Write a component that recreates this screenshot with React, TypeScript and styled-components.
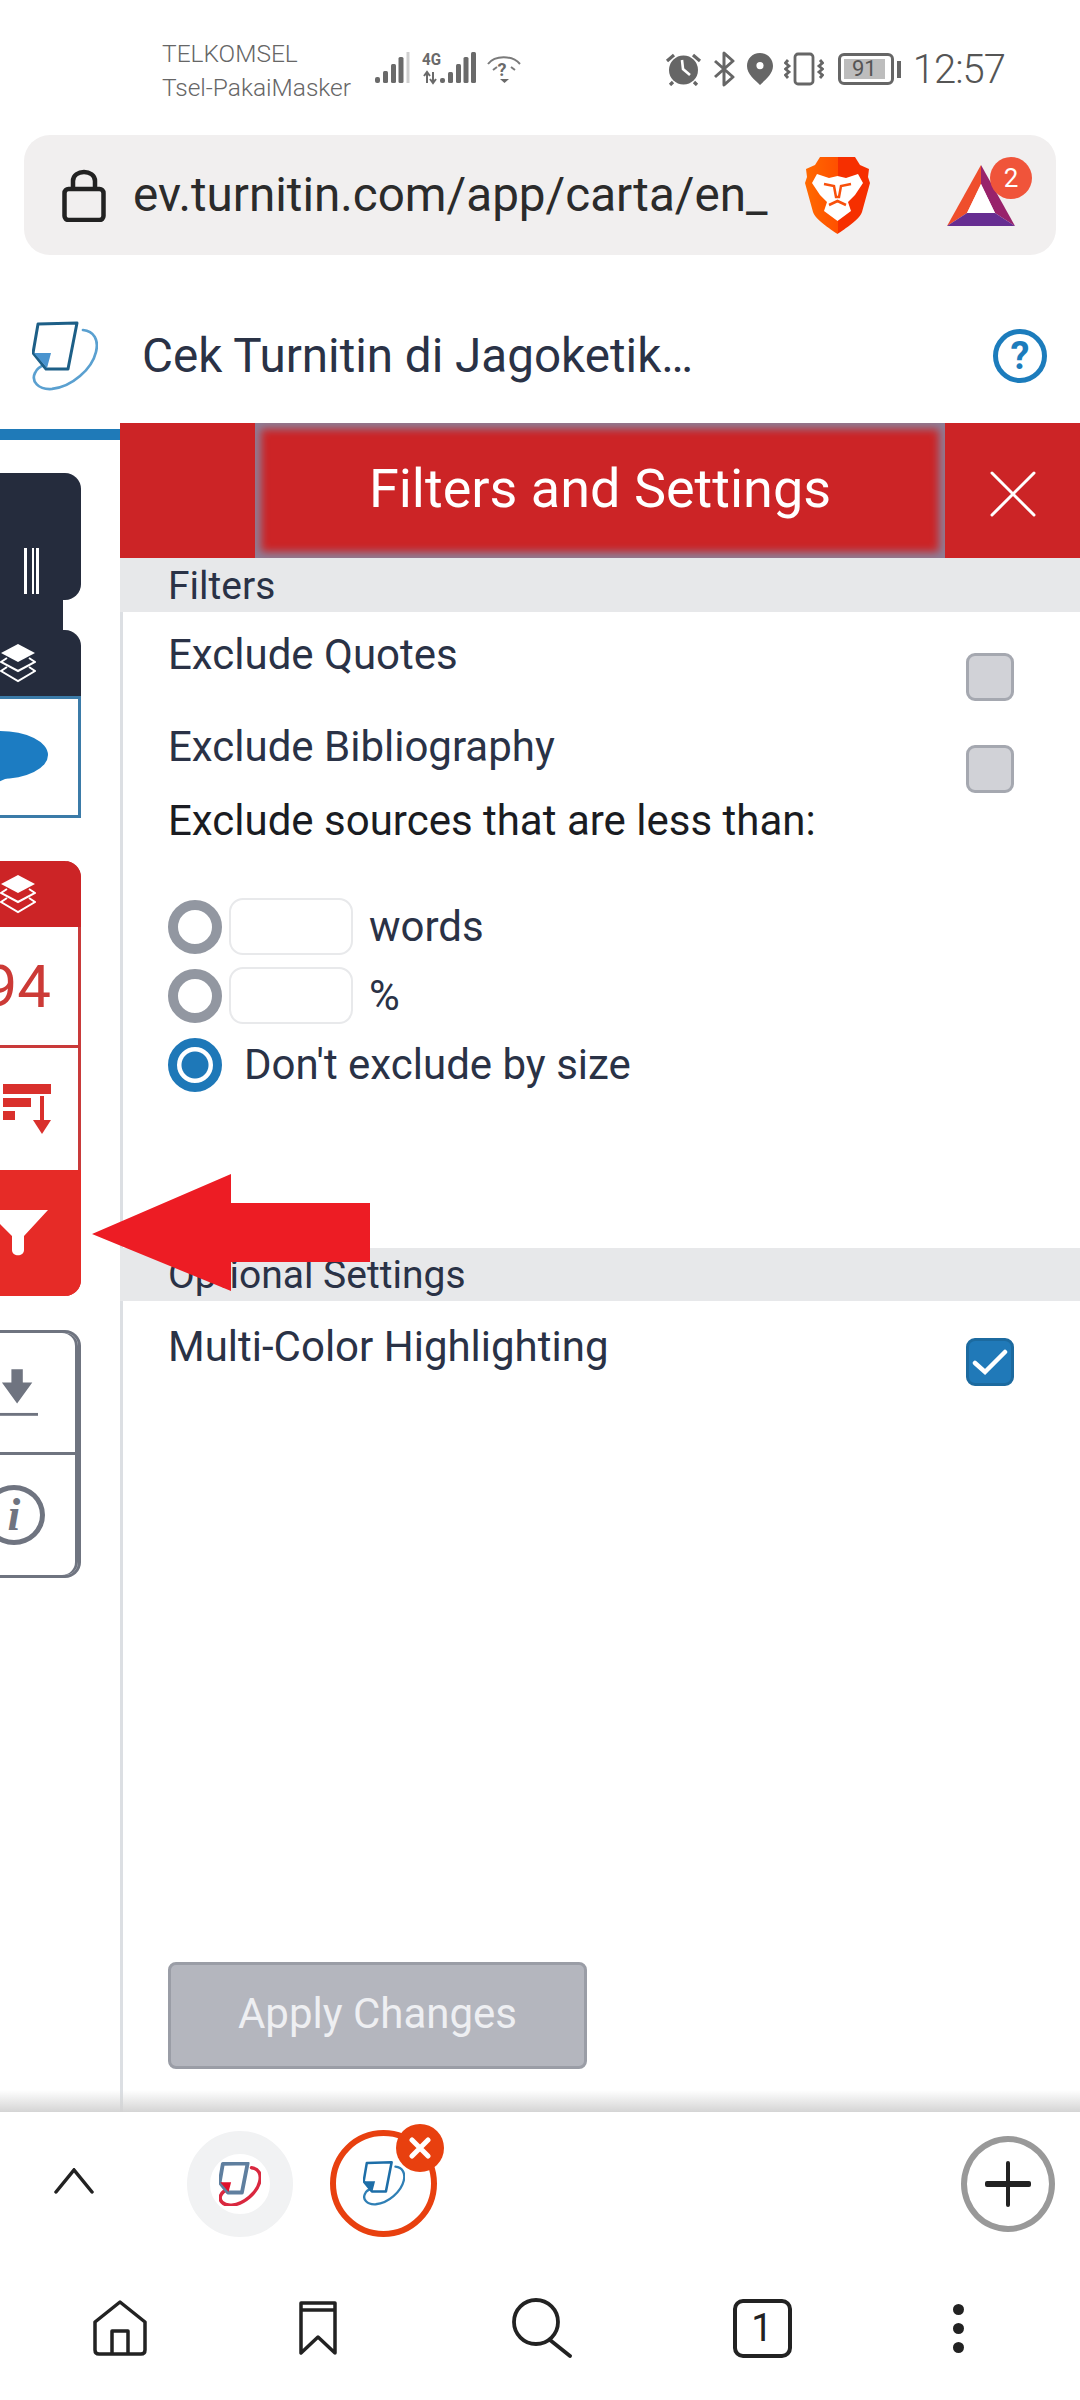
import { createGlobalStyle, styled } from "styled-components";

const GlobalStyle = createGlobalStyle`
  html, body {
    margin: 0;
    padding: 0;
    background: #fff;
  }
  * {
    box-sizing: border-box;
  }
  body {
    font-family: Roboto, "Liberation Sans", sans-serif;
  }
`;

const TurnitinLogo = ({
  size,
  paper,
  fold,
  swoosh,
  weight = 3,
}: {
  size: number;
  paper: string;
  fold: string;
  swoosh: string;
  weight?: number;
}) => (
  <svg width={size} height={size * 1.06} viewBox="0 0 66 70" fill="none">
    <path
      d="M51 9 C62 10 67 19 64 31 C60 48 40 66 20 68 C6 69 -1 60 3 52 C5 47 9 45 13 44"
      stroke={swoosh}
      strokeWidth={weight * 0.9}
      strokeLinecap="round"
    />
    <path d="M6 3 L45 2 L36 48 L14 48 L1 32 Z" fill="#fff" stroke={paper} strokeWidth={weight} strokeLinejoin="round" />
    <path d="M2 32 L19 32 L15 47 Z" fill={fold} />
  </svg>
);

const LayersIcon = () => (
  <svg width="36" height="40" viewBox="0 0 36 40" fill="none">
    <path d="M18 1 L35 10 L18 19 L1 10 Z" fill="#fff" />
    <path d="M7 15 L1 19 L18 28 L35 19 L29 15" stroke="#fff" strokeWidth="2" />
    <path d="M7 24 L1 28 L18 38 L35 28 L29 24" stroke="#fff" strokeWidth="2" />
  </svg>
);

const App = () => {
  return (
    <Page>
      <GlobalStyle />
      <StatusBar>
        <Carrier>
          <CarrierLine>TELKOMSEL</CarrierLine>
          <CarrierLine>Tsel-PakaiMasker</CarrierLine>
        </Carrier>
        <svg width="146" height="40" viewBox="0 -6 146 40" fill="#6a6a6a">
          <rect x="0" y="25" width="5" height="6" rx="2" />
          <rect x="8" y="19" width="5" height="12" rx="1.5" />
          <rect x="16" y="12" width="5" height="19" rx="1.5" />
          <rect x="23.5" y="5" width="5" height="26" rx="1.5" />
          <rect x="31.5" y="0" width="3" height="31" fill="#cfcfcf" />
          <text x="47" y="13" fontSize="17" fontWeight="700" fontFamily="Roboto" textLength="19" lengthAdjust="spacingAndGlyphs">
            4G
          </text>
          <path d="M52 31 V21 M49 24 L52 20 L55 24 M58 20 V30 M55 27 L58 31 L61 27" fill="none" stroke="#6a6a6a" strokeWidth="2" />
          <rect x="65" y="26" width="5" height="5" rx="2" />
          <rect x="73" y="20" width="5" height="11" rx="1.5" />
          <rect x="81" y="12" width="5" height="19" rx="1.5" />
          <rect x="88.5" y="5" width="5" height="26" rx="1.5" />
          <rect x="96" y="0" width="5" height="31" rx="1.5" />
          <g fill="none" stroke="#7a7a7a" strokeWidth="2">
            <path d="M113 12 C120 3 137 3 145 12" />
            <path d="M118 18 L122 15 M140 18 L136 15" />
          </g>
          <text x="122.5" y="24" fontSize="18" fontWeight="700" fontFamily="Roboto" fill="#6a6a6a">?</text>
          <path d="M125 27 H134 L129.5 31 Z" />
        </svg>
        <StatusRight>
          <svg width="37" height="34" viewBox="0 0 37 34">
            <circle cx="18.5" cy="18" r="14.5" fill="#666" />
            <path d="M17 8 L18 17 L25 23" stroke="#fff" strokeWidth="2.6" fill="none" />
            <path d="M2 9 L9 3 M35 9 L28 3 M8 30 L5 33 M29 30 L32 33" stroke="#666" strokeWidth="3.2" />
          </svg>
          <svg width="22" height="36" viewBox="0 0 22 36" fill="none">
            <path d="M2 10 L20 26 L11 34 V2 L20 10 L2 26" stroke="#666" strokeWidth="3" strokeLinejoin="round" />
          </svg>
          <PinSlot>
            <svg width="26" height="32" viewBox="0 0 26 32">
              <path
                fillRule="evenodd"
                d="M13 0 C21 0 26 6 26 13 C26 21 18 27 13 32 C8 27 0 21 0 13 C0 6 5 0 13 0 Z M13 9 A3.6 3.6 0 1 0 13 16.2 A3.6 3.6 0 1 0 13 9 Z"
                fill="#666"
              />
            </svg>
          </PinSlot>
          <svg width="40" height="34" viewBox="0 0 40 34" fill="none" stroke="#666" strokeWidth="2.8">
            <rect x="11" y="2" width="18" height="30" rx="3" />
            <path d="M4 8 L1.5 11 L5 14 L1.5 17 L5 20 L1.5 23 L4 26" />
            <path d="M36 8 L38.5 11 L35 14 L38.5 17 L35 20 L38.5 23 L36 26" />
          </svg>
          <Battery>
            <BatteryBody>
              <BatteryLevel>91</BatteryLevel>
            </BatteryBody>
            <BatteryNub />
          </Battery>
          <Clock>12:57</Clock>
        </StatusRight>
      </StatusBar>

      <AddressBar>
        <svg width="44" height="54" viewBox="0 0 44 54" fill="none" stroke="#222" strokeWidth="4.5">
          <rect x="2.5" y="21" width="39" height="31" rx="4" />
          <path d="M11 21 V13 C11 1 33 1 33 13 V21" />
        </svg>
        <Url>ev.turnitin.com/app/carta/en_</Url>
        <BraveSlot>
          <svg width="65" height="77" viewBox="0 0 65 77">
            <defs>
              <linearGradient id="brave" x1="0" x2="1" y1="0" y2="0">
                <stop offset="0" stopColor="#ff6a00" />
                <stop offset="0.5" stopColor="#ff5000" />
                <stop offset="0.5" stopColor="#f62f00" />
                <stop offset="1" stopColor="#f62f00" />
              </linearGradient>
            </defs>
            <path
              d="M15 0 H50 L55 8 L64 12 L63 20 L65 26 L57 55 C55 62 40 72 32.5 77 C25 72 10 62 8 55 L0 26 L2 20 L1 12 L10 8 Z"
              fill="url(#brave)"
            />
            <path
              d="M12 17 L24 21 L32.5 19 L41 21 L53 17 L58 26 L50 38 L43 45 L46 54 L32.5 64 L19 54 L22 45 L15 38 L7 26 Z"
              fill="#fff"
            />
            <path d="M19 27 L29 29 L31 40 H34 L36 29 L46 27" fill="none" stroke="#f8500c" strokeWidth="2.5" />
            <path d="M24 48 L32.5 44 L41 48" fill="none" stroke="#f8500c" strokeWidth="2.5" />
          </svg>
        </BraveSlot>
        <RewardsSlot>
          <svg width="68" height="61" viewBox="0 0 68 61">
            <path d="M34 0 L0 61 L20 48 L34 19 Z" fill="#ef4e2c" />
            <path d="M34 0 L68 61 L48 48 L34 19 Z" fill="#98226b" />
            <path d="M20 48 H48 L68 61 H0 Z" fill="#662d91" />
            <path d="M34 19 L48 48 H20 Z" fill="#fff" />
          </svg>
          <RewardsBadge>2</RewardsBadge>
        </RewardsSlot>
      </AddressBar>

      <PageHeader>
        <TurnitinLogo size={66} paper="#1d5f87" fold="#4a94cf" swoosh="#5aa0d0" />
        <PageTitle>Cek Turnitin di Jagoketik…</PageTitle>
        <HelpBadge>?</HelpBadge>
      </PageHeader>

      <Main>
        <Rail>
          <DarkTab>
            <GripBars />
          </DarkTab>
          <Neck />
          <LayerTab $color="#252c3d" $height={66}>
            <LayersIcon />
          </LayerTab>
          <ToolBox>
            <svg width="48" height="52" viewBox="0 0 48 52">
              <ellipse cx="0" cy="24" rx="48" ry="24" fill="#1c7cc2" />
              <path d="M-6 40 L-4 52 L14 44 Z" fill="#1c7cc2" />
            </svg>
          </ToolBox>

          <ToolGroup $marginTop={43} $color="#c93a3a">
            <LayerTab $color="#cc2426" $height={66}>
              <LayersIcon />
            </LayerTab>
            <ToolCell $height={121} $divider="#c93a3a" $pad={30}>
              <Score>94</Score>
            </ToolCell>
            <ToolCell $height={122} $pad={30}>
              <svg width="48" height="50" viewBox="0 0 48 50" fill="#d9302c">
                <rect x="0" y="0" width="48" height="10" />
                <rect x="0" y="14" width="28" height="9" />
                <rect x="0" y="27" width="12" height="9" />
                <rect x="37" y="12" width="4" height="30" />
                <path d="M30 36 H48 L39 50 Z" />
              </svg>
            </ToolCell>
            <FilterCell>
              <svg width="48" height="46" viewBox="0 0 48 46" fill="#fff">
                <path d="M-14 0 H48 L24 26 V40 C24 47 12 47 12 40 V26 Z" />
              </svg>
            </FilterCell>
          </ToolGroup>

          <ToolGroup $marginTop={34} $color="#6f7480" $outlined>
            <ToolCell $height={122} $divider="#6f7480" $pad={40}>
              <svg width="40" height="50" viewBox="0 0 40 50" fill="#6f7480">
                <path d="M12 0 H24 V14 H34 L18 36 L2 14 H12 Z" />
                <rect x="-2" y="46" width="42" height="3" />
              </svg>
            </ToolCell>
            <ToolCell $height={120} $pad={30}>
              <InfoRing>i</InfoRing>
            </ToolCell>
          </ToolGroup>
        </Rail>

        <Panel>
          <PanelHeader>
            <HeaderSpacer />
            <PanelTitle>Filters and Settings</PanelTitle>
            <CloseButton>
              <svg width="46" height="46" viewBox="0 0 46 46" stroke="#fff" strokeWidth="3" strokeLinecap="round">
                <path d="M2 2 L44 44 M44 2 L2 44" />
              </svg>
            </CloseButton>
          </PanelHeader>

          <SectionBar $height={54}>Filters</SectionBar>
          <PanelBody>
            <CheckRow $height={92}>
              <Label>Exclude Quotes</Label>
              <CheckBox $top={21} />
            </CheckRow>
            <CheckRow $height={73}>
              <Label>Exclude Bibliography</Label>
              <CheckBox $top={21} />
            </CheckRow>
            <SourcesLabel>Exclude sources that are less than:</SourcesLabel>
            <RadioList>
              <RadioRow>
                <Radio />
                <SizeInput />
                <Unit>words</Unit>
              </RadioRow>
              <RadioRow>
                <Radio />
                <SizeInput />
                <Unit>%</Unit>
              </RadioRow>
              <RadioRow>
                <Radio $checked />
                <RadioText>Don't exclude by size</RadioText>
              </RadioRow>
            </RadioList>
          </PanelBody>

          <SectionBar $height={53}>Optional Settings</SectionBar>
          <OptionBody>
            <CheckRow $height={70}>
              <Label>Multi-Color Highlighting</Label>
              <CheckBox $top={14} $checked>
                <svg width="36" height="28" viewBox="0 0 36 28" fill="none" stroke="#fff" strokeWidth="4.5" strokeLinecap="round">
                  <path d="M3 15 L13 24 L33 4" />
                </svg>
              </CheckBox>
            </CheckRow>
            <ApplyButton>Apply Changes</ApplyButton>
          </OptionBody>

          <Arrow viewBox="0 0 278 117" width="278" height="117">
            <path d="M0 60 L139 0 V29 H278 V88 H139 V117 Z" fill="#ed1c24" />
          </Arrow>
        </Panel>
      </Main>

      <BottomBar>
        <TabRow>
          <ChevronSlot>
            <svg width="40" height="26" viewBox="0 0 40 26" fill="none" stroke="#222" strokeWidth="3.5" strokeLinecap="round">
              <path d="M2 24 L20 2 L38 24" />
            </svg>
          </ChevronSlot>
          <TabCircle>
            <TurnitinLogo size={42} paper="#5f7f9f" fold="#e0102c" swoosh="#d9283f" weight={6} />
          </TabCircle>
          <ActiveTab>
            <TurnitinLogo size={42} paper="#1d6ea8" fold="#1d6ea8" swoosh="#2f7fb5" weight={4} />
            <TabClose>
              <svg width="22" height="22" viewBox="0 0 22 22" stroke="#fff" strokeWidth="5" strokeLinecap="round">
                <path d="M3 3 L19 19 M19 3 L3 19" />
              </svg>
            </TabClose>
          </ActiveTab>
          <NewTab>
            <svg width="46" height="46" viewBox="0 0 46 46" fill="#222">
              <rect x="0" y="20" width="46" height="6" rx="2" />
              <rect x="21" y="0" width="4" height="46" rx="2" />
            </svg>
          </NewTab>
        </TabRow>
        <NavRow>
          <svg width="54" height="56" viewBox="0 0 54 56" fill="none" stroke="#222" strokeWidth="3.5" strokeLinejoin="round">
            <path d="M2 22 L27 2 L52 22 V50 C52 52 51 54 48 54 H6 C3 54 2 52 2 50 Z" />
            <path d="M19 54 V31 H35 V54" />
          </svg>
          <svg width="38" height="54" viewBox="0 0 38 54" fill="none" stroke="#222" strokeWidth="3.5" strokeLinejoin="round">
            <path d="M2 2 H36 V52 L19 36 L2 52 Z M2 9 H36" />
          </svg>
          <svg width="60" height="60" viewBox="0 0 60 60" fill="none" stroke="#222" strokeWidth="3.8" strokeLinecap="round">
            <circle cx="24" cy="24" r="22" />
            <path d="M38 42 L58 58" />
          </svg>
          <TabCount>1</TabCount>
          <MenuDots>
            <MenuDot />
            <MenuDot />
            <MenuDot />
          </MenuDots>
        </NavRow>
      </BottomBar>
    </Page>
  );
};

export default App;

const Page = styled.div`
  width: 1080px;
  height: 2400px;
  display: flex;
  flex-direction: column;
  overflow: hidden;
  background: #fff;
`;

const StatusBar = styled.div`
  height: 135px;
  flex-shrink: 0;
  display: flex;
  align-items: flex-start;
  padding: 41px 75px 0 162px;
  color: #666;
  & > svg {
    margin: 5px 0 0 24px;
  }
`;

const Carrier = styled.div`
  width: 189px;
  display: flex;
  flex-direction: column;
  gap: 9px;
`;

const CarrierLine = styled.span`
  font-size: 24.5px;
  font-weight: 300;
  line-height: 25px;
  white-space: nowrap;
`;

const StatusRight = styled.div`
  margin-left: auto;
  height: 36px;
  margin-top: 10px;
  display: flex;
  align-items: center;
  gap: 11px;
`;

const PinSlot = styled.div`
  display: flex;
  margin-left: 1px;
`;

const Battery = styled.div`
  display: flex;
  align-items: center;
  gap: 3px;
  margin-left: 3px;
`;

const BatteryBody = styled.div`
  width: 56px;
  height: 32px;
  padding: 3px;
  border: 3px solid #666;
  border-radius: 6px;
`;

const BatteryLevel = styled.div`
  height: 100%;
  width: 41px;
  background: #bdbdbd;
  color: #555;
  font-size: 22px;
  line-height: 20px;
  text-align: center;
`;

const BatteryNub = styled.div`
  width: 4px;
  height: 17px;
  background: #666;
`;

const Clock = styled.span`
  font-size: 40px;
  font-weight: 300;
  margin-left: 1px;
  letter-spacing: -1px;
  color: #555;
`;

const AddressBar = styled.div`
  height: 120px;
  flex-shrink: 0;
  margin: 0 24px;
  padding-left: 38px;
  display: flex;
  align-items: center;
  background: #f1efef;
  border-radius: 26px;
`;

const Url = styled.span`
  margin-left: 27px;
  width: 672px;
  font-size: 47.6px;
  color: #2b2b2b;
  white-space: nowrap;
`;

const BraveSlot = styled.div`
  display: flex;
`;

const RewardsSlot = styled.div`
  position: relative;
  display: flex;
  margin-left: 77px;
`;

const RewardsBadge = styled.span`
  position: absolute;
  top: -8px;
  left: 43px;
  width: 42px;
  height: 42px;
  border-radius: 50%;
  background: #f0543a;
  color: #fff;
  font-size: 26px;
  line-height: 42px;
  text-align: center;
`;

const PageHeader = styled.div`
  height: 168px;
  flex-shrink: 0;
  display: flex;
  align-items: center;
  padding: 34px 33px 0 32px;
`;

const PageTitle = styled.span`
  margin-left: 44px;
  font-size: 47.6px;
  color: #2a3246;
  white-space: nowrap;
`;

const HelpBadge = styled.span`
  margin-left: auto;
  width: 54px;
  height: 54px;
  border: 5px solid #1c7cbc;
  border-radius: 50%;
  color: #1c7cbc;
  font-size: 38px;
  font-weight: 700;
  line-height: 44px;
  text-align: center;
`;

const Main = styled.div`
  flex: 1;
  display: flex;
  min-height: 0;
`;

const Rail = styled.div`
  width: 120px;
  flex-shrink: 0;
  margin-top: 6px;
  padding-top: 33px;
  border-top: 11px solid #1f7ab8;
  display: flex;
  flex-direction: column;
  align-items: flex-start;
`;

const DarkTab = styled.div`
  width: 81px;
  height: 127px;
  padding: 75px 0 0 24px;
  background: #252c3d;
  border-radius: 0 16px 16px 0;
`;

const GripBars = styled.div`
  width: 15px;
  height: 46px;
  border-left: 3px solid #fff;
  border-right: 3px solid #fff;
  background: linear-gradient(90deg, transparent 5px, #fff 5px, #fff 7px, transparent 7px);
`;

const Neck = styled.div`
  width: 63px;
  height: 30px;
  background: #252c3d;
`;

const LayerTab = styled.div<{ $color: string; $height: number }>`
  width: 81px;
  height: ${({ $height }) => $height}px;
  flex-shrink: 0;
  display: flex;
  align-items: center;
  background: ${({ $color }) => $color};
  border-radius: 0 16px 0 0;
`;

const ToolBox = styled.div`
  width: 81px;
  height: 122px;
  display: flex;
  align-items: center;
  border: 3px solid #3b7ba8;
  border-left: none;
`;

const ToolGroup = styled.div<{ $marginTop: number; $color: string; $outlined?: boolean }>`
  width: 81px;
  margin-top: ${({ $marginTop }) => $marginTop}px;
  border-radius: 0 16px 16px 0;
  overflow: hidden;
  box-shadow: inset -3px 0 0 ${({ $color }) => $color};
  ${({ $outlined, $color }) => $outlined && `border: 3px solid ${$color}; border-left: none;`}
`;

const ToolCell = styled.div<{ $height: number; $divider?: string; $pad: number }>`
  height: ${({ $height }) => $height}px;
  display: flex;
  align-items: center;
  justify-content: flex-end;
  padding-right: ${({ $pad }) => $pad}px;
  ${({ $divider }) => $divider && `border-bottom: 3px solid ${$divider};`}
`;

const Score = styled.span`
  font-size: 60px;
  color: #cc3a36;
  white-space: nowrap;
`;

const FilterCell = styled.div`
  height: 126px;
  display: flex;
  align-items: center;
  background: #e62b27;
`;

const InfoRing = styled.span`
  flex-shrink: 0;
  width: 62px;
  height: 60px;
  margin-right: 3px;
  border: 5px solid #6f7480;
  border-radius: 50%;
  color: #6f7480;
  font-family: "Liberation Serif", serif;
  font-size: 46px;
  font-style: italic;
  font-weight: 700;
  line-height: 50px;
  text-align: center;
`;

const Panel = styled.div`
  position: relative;
  flex: 1;
  display: flex;
  flex-direction: column;
  min-width: 0;
  border-left: 3px solid #dcdfe3;
`;

const PanelHeader = styled.div`
  height: 135px;
  flex-shrink: 0;
  margin-left: -3px;
  display: grid;
  grid-template-columns: 135px 690px 135px;
  background: #cc2426;
`;

const HeaderSpacer = styled.div``;

const PanelTitle = styled.div`
  display: flex;
  align-items: center;
  justify-content: center;
  padding-bottom: 5px;
  color: #fff;
  font-size: 54px;
  box-shadow: inset 0 0 8px 6px #8d7f98;
`;

const CloseButton = styled.div`
  display: flex;
  align-items: center;
  justify-content: center;
  padding-top: 6px;
`;

const SectionBar = styled.div<{ $height: number }>`
  height: ${({ $height }) => $height}px;
  flex-shrink: 0;
  margin-left: -3px;
  padding-left: 48px;
  background: #e7e8ea;
  color: #2a3246;
  font-size: 39px;
  line-height: ${({ $height }) => $height + 2}px;
`;

const PanelBody = styled.div`
  height: 636px;
  flex-shrink: 0;
  padding: 20px 66px 0 45px;
`;

const CheckRow = styled.div<{ $height: number }>`
  height: ${({ $height }) => $height}px;
  display: flex;
  justify-content: space-between;
  align-items: flex-start;
`;

const Label = styled.span`
  color: #2a3246;
  font-size: 42px;
  line-height: 46px;
`;

const CheckBox = styled.div<{ $checked?: boolean; $top: number }>`
  width: 48px;
  height: 48px;
  margin-top: ${({ $top }) => $top}px;
  display: flex;
  align-items: center;
  justify-content: center;
  background: ${({ $checked }) => ($checked ? "#2079b8" : "#d1d2d7")};
  border: 3px solid ${({ $checked }) => ($checked ? "#1c6a9f" : "#a5a8b0")};
  border-radius: 9px;
`;

const SourcesLabel = styled.div`
  color: #1a1c22;
  font-size: 42px;
  line-height: 46px;
  margin-top: 1px;
`;

const RadioList = styled.div`
  margin-top: 54px;
  display: flex;
  flex-direction: column;
  gap: 12px;
`;

const RadioRow = styled.div`
  height: 57px;
  display: flex;
  align-items: center;
`;

const Radio = styled.span<{ $checked?: boolean }>`
  flex-shrink: 0;
  width: 54px;
  height: 54px;
  border-radius: 50%;
  border: ${({ $checked }) => ($checked ? "9px solid #1e78b8" : "10px solid #9297a1")};
  background: ${({ $checked }) => ($checked ? "radial-gradient(circle, #1e78b8 0 13px, #fff 14px)" : "#fff")};
`;

const SizeInput = styled.div`
  width: 124px;
  height: 57px;
  margin-left: 7px;
  border: 2px solid #e8e9eb;
  border-radius: 14px;
`;

const Unit = styled.span`
  margin-left: 16px;
  color: #2a3246;
  font-size: 42px;
`;

const RadioText = styled.span`
  margin-left: 22px;
  color: #2a3246;
  font-size: 42px;
`;

const OptionBody = styled.div`
  flex: 1;
  display: flex;
  flex-direction: column;
  padding: 23px 66px 43px 45px;
`;

const ApplyButton = styled.div`
  width: 419px;
  height: 107px;
  margin-top: auto;
  background: #b4b6be;
  border: 3px solid #9a9da6;
  border-radius: 8px;
  color: #eeeff2;
  font-size: 42px;
  line-height: 98px;
  text-align: center;
`;

const Arrow = styled.svg`
  position: absolute;
  left: -31px;
  top: 751px;
`;

const BottomBar = styled.div`
  position: relative;
  height: 288px;
  flex-shrink: 0;
  background: #fff;
  &::before {
    content: "";
    position: absolute;
    left: 0;
    right: 0;
    top: -22px;
    height: 22px;
    background: linear-gradient(rgba(200, 200, 200, 0), rgba(210, 210, 210, 0.95));
  }
`;

const TabRow = styled.div`
  height: 125px;
  display: flex;
  align-items: flex-end;
  padding: 0 25px 0 54px;
`;

const ChevronSlot = styled.div`
  display: flex;
  margin-bottom: 43px;
`;

const TabCircle = styled.div`
  width: 106px;
  height: 106px;
  margin-left: 93px;
  display: flex;
  align-items: center;
  justify-content: center;
  border-radius: 50%;
  border: 23px solid #f1f2f3;
`;

const ActiveTab = styled.div`
  position: relative;
  width: 107px;
  height: 107px;
  margin-left: 37px;
  display: flex;
  align-items: center;
  justify-content: center;
  border-radius: 50%;
  border: 6px solid #e8400f;
`;

const TabClose = styled.span`
  position: absolute;
  top: -12px;
  right: -13px;
  width: 48px;
  height: 48px;
  display: flex;
  align-items: center;
  justify-content: center;
  border-radius: 50%;
  background: #e8400f;
`;

const NewTab = styled.div`
  width: 94px;
  height: 96px;
  margin: 0 0 5px auto;
  display: flex;
  align-items: center;
  justify-content: center;
  border-radius: 50%;
  border: 6px solid #999;
`;

const NavRow = styled.div`
  margin-top: 61px;
  display: grid;
  grid-template-columns: 240px 156px 292px 148px 244px;
  justify-items: center;
  align-items: center;
`;

const TabCount = styled.span`
  width: 59px;
  height: 59px;
  border: 4px solid #222;
  border-radius: 10px;
  color: #222;
  font-size: 38px;
  line-height: 50px;
  text-align: center;
`;

const MenuDots = styled.div`
  display: flex;
  flex-direction: column;
  gap: 8px;
`;

const MenuDot = styled.span`
  width: 11px;
  height: 11px;
  border-radius: 50%;
  background: #222;
`;
